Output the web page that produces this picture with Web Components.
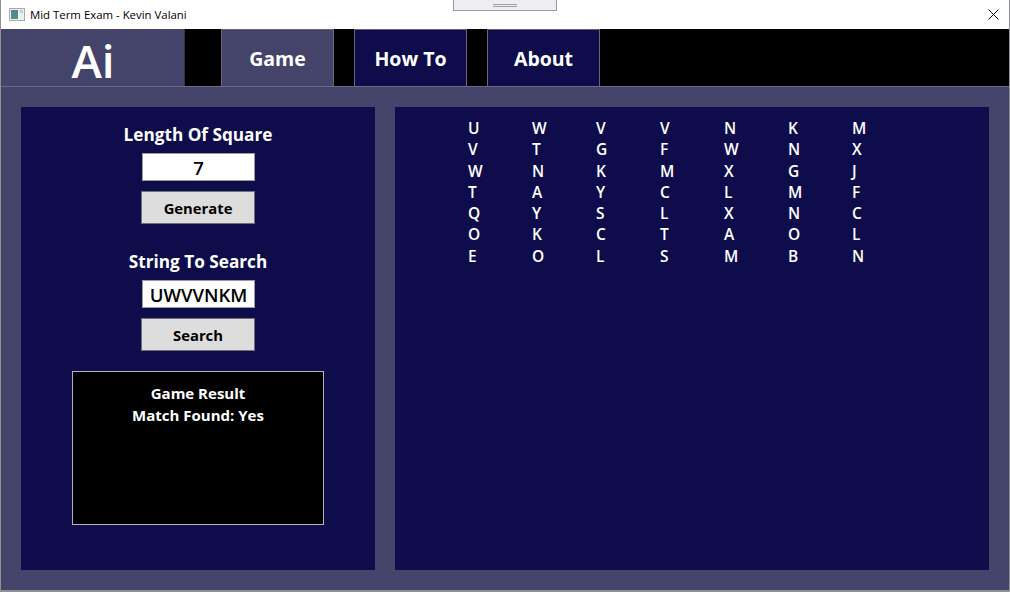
<!DOCTYPE html>
<html><head><meta charset="utf-8"><style>
html,body{margin:0;padding:0;width:1010px;height:592px;overflow:hidden;background:#fff}
</style></head><body>
<exam-window>
<title-bar slot="title">Mid Term Exam - Kevin Valani</title-bar>
<nav-bar slot="nav"></nav-bar>
<control-panel slot="left"></control-panel>
<letter-grid slot="right"></letter-grid>
</exam-window>
<script>
const FONT='"Open Sans","Noto Sans",sans-serif';
function def(name,html,setup){customElements.define(name,class extends HTMLElement{constructor(){super();this.attachShadow({mode:'open'}).innerHTML=html;}connectedCallback(){setup&&setup(this.shadowRoot,this)}})}
def('exam-window',`<style>
:host{display:flex;flex-direction:column;position:relative;width:1010px;height:592px;box-sizing:border-box;border:1px solid #8b8b8f;border-width:0 1px 2px 1px;border-color:#8f8f94;background:#44446a;font-family:${FONT}}
.main{flex:1;display:flex;gap:20px;padding:20px 20px 20px 20px;min-height:0}
.handle{position:absolute;left:452px;top:-1px;width:102px;height:10px;background:#eeedf2;border:1px solid #9a9a9e;display:flex;align-items:center;justify-content:center}
.handle i{display:block;width:24px;height:1px;border-top:1px solid #a0a0a4;border-bottom:1px solid #a0a0a4;margin-top:1px}
</style><slot name="title"></slot><slot name="nav"></slot><div class="main"><slot name="left"></slot><slot name="right"></slot></div><div class="handle"><i></i></div>`);
def('title-bar',`<style>
:host{display:flex;align-items:center;height:29px;background:#fff;color:#000;font:12px ${FONT};flex:none}
svg{margin:0 5px 0 8px;flex:none}.t{flex:1;font-size:11.4px;margin-top:0}.x{margin:0 10px 0 0}
</style><svg width="16" height="13" viewBox="0 0 16 13"><rect x=".5" y=".5" width="15" height="12" fill="#eef0f0" stroke="#a9a9a9"/><rect x="2" y="2" width="7" height="9" fill="#4f8f84"/><rect x="2" y="2" width="7" height="3" fill="#5d7f9b"/><rect x="11" y="2" width="3" height="3" fill="#c4cfd0"/></svg><span class="t"><slot></slot></span><svg class="x" width="11" height="11" viewBox="0 0 11 11" style="margin-right:10px"><path d="M.5.5l10 10M10.500.5l-10 10" stroke="#000" stroke-width="1" fill="none"/></svg>`);
def('nav-tab',`<style>
:host{display:flex;align-items:center;justify-content:center;box-sizing:border-box;width:113px;height:57px;background:#0e0c4a;color:#fff;border:1px solid #66667e;border-bottom:0;font:700 19.500px ${FONT};padding-top:0}
:host([active]){background:#44446a}
</style><slot></slot>`);
def('nav-bar',`<style>
:host{display:flex;flex:none;height:58px;box-sizing:border-box;background:#000;border-bottom:1px solid #6a6a80;align-items:flex-start}
.logo{width:184px;height:57px;background:#44446a;color:#fff;box-sizing:border-box;border-right:1px solid #33334f;display:flex;align-items:center;justify-content:center;font:600 46px/1 ${FONT};padding-left:1px}
.logo span{transform:translateY(2px)}
.tabs{display:flex;gap:20px;margin-left:36px}
</style><div class="logo"><span>Ai</span></div><div class="tabs"><nav-tab active>Game</nav-tab><nav-tab>How To</nav-tab><nav-tab>About</nav-tab></div>`);
def('field-box',`<style>
:host{display:flex;align-items:center;justify-content:center;box-sizing:border-box;width:113px;height:28px;margin-left:1px;background:#fff;color:#000;border:1px solid #9a9aa6;font:600 18.500px ${FONT};white-space:nowrap}
</style><slot></slot>`);
def('action-button',`<style>
:host{display:flex;align-items:center;justify-content:center;box-sizing:border-box;width:114px;height:33px;background:#dddddd;color:#000;border:1px solid #707078;font:700 14.800px ${FONT};padding-top:0}
</style><slot></slot>`);
def('control-panel',`<style>
:host{display:flex;flex-direction:column;align-items:center;box-sizing:border-box;width:354px;height:463px;background:#0e0c4a;color:#fff;padding-top:16px;flex:none}
.l{font:700 17.200px/24px ${FONT};height:24px;margin-bottom:6px}
field-box{margin-bottom:10px}
action-button{margin-bottom:26px}
.res{box-sizing:border-box;width:252px;height:154px;background:#000;border:1px solid #b4b4b8;margin-top:-6px;padding-top:10px;text-align:center;font:700 15px/22px ${FONT}}
</style><div class="l">Length Of Square</div><field-box>7</field-box><action-button>Generate</action-button>
<div class="l">String To Search</div><field-box>UWVVNKM</field-box><action-button>Search</action-button>
<div class="res">Game Result<br>Match Found: Yes</div>`);
def('letter-grid',`<style>
:host{display:block;box-sizing:border-box;width:594px;height:463px;background:#0e0c4a;color:#fff;padding:11px 0 0 73px;flex:none}
.g{display:grid;grid-template-columns:repeat(7,64px);grid-auto-rows:21.300px;font:600 15.500px/21.300px ${FONT}}
</style><div class="g"></div>`,(r)=>{
const rows=["UWVVNKM","VTGFWNX","WNKMXGJ","TAYCLMF","QYSLXNC","OKCTAOL","EOLSMBN"];
r.querySelector('.g').innerHTML=rows.map(s=>[...s].map(c=>`<span>${c}</span>`).join('')).join('');
});
</script></body></html>
